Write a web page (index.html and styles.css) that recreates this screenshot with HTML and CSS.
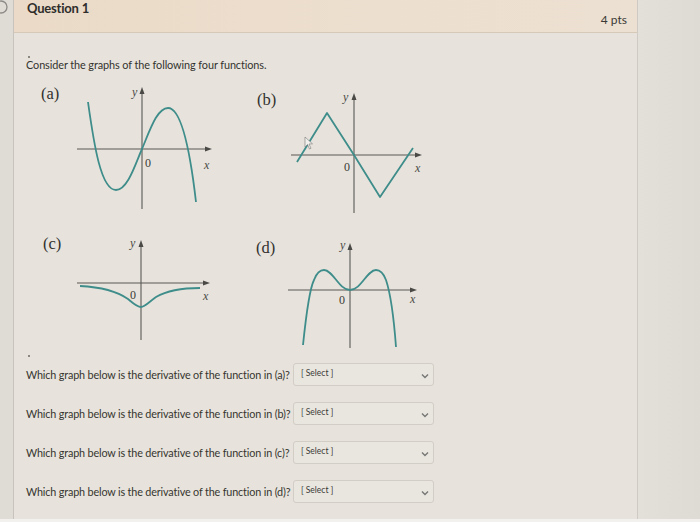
FILE: index.html
```html
<!DOCTYPE html>
<html>
<head>
<meta charset="utf-8">
<link rel="stylesheet" href="styles.css">
</head>
<body>
<div class="page">
  <div class="gutter">
    <svg class="mark" width="13" height="16" viewBox="0 0 13 16"><circle cx="1" cy="7" r="6" fill="none" stroke="#8c8a86" stroke-width="1.3"/></svg>
  </div>
  <div class="card">
    <div class="card-head">
      <div class="title">Question 1</div>
      <div class="pts">4 pts</div>
    </div>
    <div class="card-body">
      <span class="dot"></span>
      <p class="intro">Consider the graphs of the following four functions.</p>
      <svg class="figure" width="400" height="272" viewBox="30 80 400 272">
        <g class="lbl">
          <text x="41" y="99">(a)</text>
          <text x="257" y="105">(b)</text>
          <text x="43" y="249">(c)</text>
          <text x="256" y="253">(d)</text>
        </g>
        <g class="ax">
          <line x1="142" y1="209" x2="142" y2="91"/>
          <line x1="77" y1="149" x2="208" y2="149"/>
          <line x1="354" y1="213" x2="354" y2="97"/>
          <line x1="291" y1="155" x2="418" y2="155"/>
          <line x1="141" y1="340" x2="141" y2="244"/>
          <line x1="77" y1="283" x2="206" y2="283"/>
          <line x1="350" y1="348" x2="350" y2="247"/>
          <line x1="288" y1="290" x2="413" y2="290"/>
        </g>
        <g class="arr">
          <path d="M142,87 L139.5,94 L144.5,94 Z"/>
          <path d="M212,149 L205,146.5 L205,151.5 Z"/>
          <path d="M354,93 L351.5,100 L356.5,100 Z"/>
          <path d="M422,155 L415,152.5 L415,157.5 Z"/>
          <path d="M141,240 L138.5,247 L143.5,247 Z"/>
          <path d="M210,283 L203,280.5 L203,285.5 Z"/>
          <path d="M350,243 L347.5,250 L352.5,250 Z"/>
          <path d="M417,290 L410,287.5 L410,292.5 Z"/>
        </g>
        <g class="var">
          <text x="132" y="96">y</text>
          <text x="204" y="169">x</text>
          <text x="343" y="101">y</text>
          <text x="415" y="172">x</text>
          <text x="130" y="247">y</text>
          <text x="203" y="300">x</text>
          <text x="340" y="249">y</text>
          <text x="410" y="303">x</text>
        </g>
        <g class="zero">
          <text x="145" y="167">0</text>
          <text x="344" y="171">0</text>
          <text x="130" y="299">0</text>
          <text x="339" y="304">0</text>
        </g>
        <g class="curve">
          <path d="M88,102 C94,145 101,190 116,190 C128,190 136,162 142,149 C150,130 157,108 168,108 C181,108 190,150 196,202"/>
          <path d="M297,162 L327,113 L354,155 L380,197 L413,148"/>
          <path d="M80,286 C100,287 118,292 128,299 C134,304 137,307 141,307 C145,307 149,302 156,297 C168,290 185,288 200,288"/>
          <path d="M303,345 C306,316 309,290 314,280 C317,272 320,270 324,270 C333,270 339,290 350,290 C361,290 367,270 376,270 C380,270 383,272 386,280 C390,292 394,320 396,347"/>
        </g>
        <path class="cursor" d="M305,137 L305,147 L307.5,144.5 L309.5,149 L311,148.3 L309,144 L312.5,143.8 Z"/>
      </svg>
      <span class="dot dot2"></span>
      <div class="qs">
        <div class="q"><span class="qtext">Which graph below is the derivative of the function in (a)?</span><div class="sel"><span>[ Select ]</span><svg width="8" height="6" viewBox="0 0 8 6"><path d="M1,1.5 L4,4.5 L7,1.5" fill="none" stroke="#777" stroke-width="1.4"/></svg></div></div>
        <div class="q"><span class="qtext">Which graph below is the derivative of the function in (b)?</span><div class="sel"><span>[ Select ]</span><svg width="8" height="6" viewBox="0 0 8 6"><path d="M1,1.5 L4,4.5 L7,1.5" fill="none" stroke="#777" stroke-width="1.4"/></svg></div></div>
        <div class="q"><span class="qtext">Which graph below is the derivative of the function in (c)?</span><div class="sel"><span>[ Select ]</span><svg width="8" height="6" viewBox="0 0 8 6"><path d="M1,1.5 L4,4.5 L7,1.5" fill="none" stroke="#777" stroke-width="1.4"/></svg></div></div>
        <div class="q"><span class="qtext">Which graph below is the derivative of the function in (d)?</span><div class="sel"><span>[ Select ]</span><svg width="8" height="6" viewBox="0 0 8 6"><path d="M1,1.5 L4,4.5 L7,1.5" fill="none" stroke="#777" stroke-width="1.4"/></svg></div></div>
      </div>
    </div>
  </div>
  <div class="outside"></div>
</div>
<div class="strip"></div>
</body>
</html>
```
FILE: styles.css
```css
html, body {
  margin: 0;
  padding: 0;
  background: #f0eeea;
  font-family: Lato, "Open Sans", sans-serif;
  color: #3a3936;
}
.page {
  display: flex;
  height: 519px;
  background: #e2dfd9;
  overflow: hidden;
}
.gutter {
  width: 13px;
  flex: none;
  background: #dfdcd6;
}
.mark { display: block; }
.card {
  width: 623px;
  flex: none;
  background: #e7e3dc;
  border-left: 1px solid #c8c4bd;
  border-right: 1px solid #cfcbc4;
  display: flex;
  flex-direction: column;
}
.card-head {
  height: 33px;
  box-sizing: border-box;
  background: linear-gradient(90deg, #eadac7, #eddfcf 60%, #ece0d2);
  border-bottom: 1px solid #d6c9b8;
  display: flex;
  justify-content: space-between;
  align-items: flex-start;
  padding: 0 10px 0 13px;
}
.title {
  font-size: 13px;
  font-weight: 700;
  color: #2e2d2b;
  margin-top: 0;
  letter-spacing: -0.2px;
}
.pts {
  font-size: 12px;
  color: #3a3936;
  margin-top: 12px;
}
.card-body {
  position: relative;
  padding: 0 0 0 12px;
}
.dot {
  position: absolute;
  left: 14px;
  top: 23px;
  width: 2px;
  height: 2px;
  background: #6d6a65;
  border-radius: 1px;
}
.dot2 { top: 322px; }
.intro {
  margin: 25px 0 0 0;
  font-size: 10.9px;
  letter-spacing: -0.1px;
  color: #34332f;
  line-height: 13px;
}
.figure {
  display: block;
  margin: 9px 0 0 4px;
  overflow: visible;
}
.lbl text {
  font-family: "Liberation Serif", serif;
  font-size: 16.5px;
  fill: #33322f;
}
.var text {
  font-family: "Liberation Serif", serif;
  font-style: italic;
  font-size: 12px;
  fill: #4a4946;
}
.zero text {
  font-family: "Liberation Serif", serif;
  font-size: 12px;
  fill: #3a3936;
}
.ax line {
  stroke: #5a5955;
  stroke-width: 1.1;
}
.arr path { fill: #4a4946; }
.curve path {
  fill: none;
  stroke: #3f8d8b;
  stroke-width: 1.8;
  stroke-linejoin: round;
}
.cursor {
  fill: #f2f0ec;
  stroke: #777;
  stroke-width: 0.6;
}
.qs {
  margin-top: 11px;
  display: flex;
  flex-direction: column;
  gap: 16px;
}
.q {
  display: flex;
  align-items: center;
}
.qtext {
  width: 267px;
  flex: none;
  font-size: 10.8px;
  letter-spacing: -0.15px;
  color: #36352f;
}
.sel {
  width: 141px;
  height: 23px;
  box-sizing: border-box;
  border: 1px solid #d2cdc5;
  border-radius: 3px;
  background: #e9e6df;
  display: flex;
  align-items: center;
  justify-content: space-between;
  padding: 0 4px 0 7px;
}
.sel span {
  font-size: 8.5px;
  color: #3a3936;
  margin-top: -3px;
}
.sel svg { display: block; margin-top: 2px; }
.outside {
  flex: 1;
  background: linear-gradient(90deg, #e3e0da, #dedbd5);
}
.strip {
  height: 3px;
  background: #f3f1ee;
}
```
